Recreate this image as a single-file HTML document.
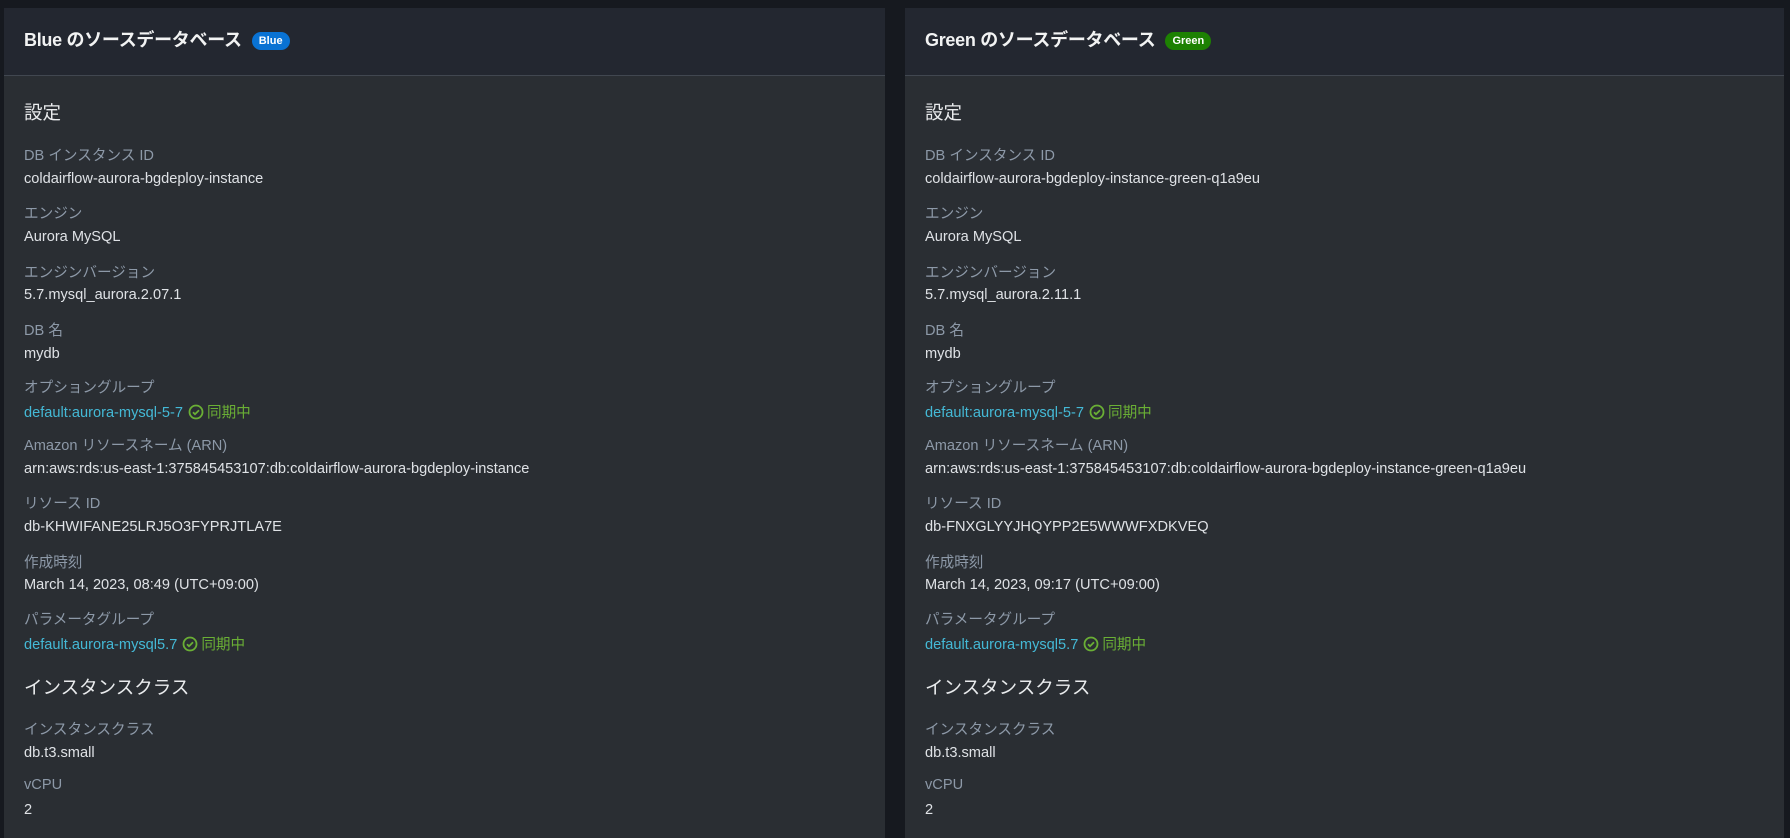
<!DOCTYPE html>
<html><head><meta charset="utf-8"><style>
body{margin:0;width:1790px;height:830px;background:#16191f;font-family:"Liberation Sans","Noto Sans CJK JP",sans-serif;overflow:hidden;position:relative}
.p{position:absolute;top:8px;height:830px;background:#2a2e33}
.h{height:67px;background:#232730;border-bottom:1px solid #414750;position:relative}
.t{position:absolute;left:20px;top:18px;font-size:18px;font-weight:bold;color:#f2f3f3;white-space:nowrap;letter-spacing:-0.3px}
.b{display:inline-block;font-size:11px;font-weight:bold;color:#fff;border-radius:11px;padding:3px 7px;margin-left:10px;vertical-align:2px;letter-spacing:0}
.c{position:absolute;left:20px;font-size:14.6px;white-space:nowrap}
.s{font-size:18.5px;color:#e9ebed}
.l{color:#8d99a8}.v{color:#dfe2e6}.k{color:#44b9d6}.g{color:#6aaf35}
svg{vertical-align:-3px;margin:0 3px 0 5px}
</style></head><body>
<div class="p" style="left:4px;width:881px"><div class="h"><div class="t">Blue のソースデータベース<span class="b" style="background:#0972d3">Blue</span></div></div></div>
<div class="p" style="left:905px;width:879px"><div class="h"><div class="t">Green のソースデータベース<span class="b" style="background:#1d8102">Green</span></div></div></div>
<div id="L"></div>
<script>
function col(x,d){var y=[[153,'l','DB インスタンス ID'],[180,'v',d[0]],[211,'l','エンジン'],[238,'v','Aurora MySQL'],[270,'l','エンジンバージョン'],[296,'v',d[1]],[328,'l','DB 名'],[355,'v','mydb'],[385,'l','オプショングループ'],[410,'k','default:aurora-mysql-5-7',1],[443,'l','Amazon リソースネーム (ARN)'],[470,'v',d[2]],[501,'l','リソース ID'],[528,'v',d[3]],[560,'l','作成時刻'],[586,'v',d[4]],[617,'l','パラメータグループ'],[642,'k','default.aurora-mysql5.7',1],[727,'l','インスタンスクラス'],[754,'v','db.t3.small'],[786,'l','vCPU'],[811,'v','2']];
var h='<div class="c s" style="left:'+x+'px;top:99px">設定</div><div class="c s" style="left:'+x+'px;top:674px">インスタンスクラス</div>';
y.forEach(function(r){h+='<div class="c '+r[1]+'" style="left:'+x+'px;top:'+(r[0]-9)+'px">'+r[2]+(r[3]?'<svg width="16" height="16" viewBox="0 0 16 16"><circle cx="8" cy="8" r="6.5" fill="none" stroke="#6aaf35" stroke-width="1.8"/><path d="M5 8.2l2 2 4-4" fill="none" stroke="#6aaf35" stroke-width="1.8"/></svg><span class="g">同期中</span>':'')+'</div>'});
return h}
document.getElementById('L').innerHTML=col(24,['coldairflow-aurora-bgdeploy-instance','5.7.mysql_aurora.2.07.1','arn:aws:rds:us-east-1:375845453107:db:coldairflow-aurora-bgdeploy-instance','db-KHWIFANE25LRJ5O3FYPRJTLA7E','March 14, 2023, 08:49 (UTC+09:00)'])+col(925,['coldairflow-aurora-bgdeploy-instance-green-q1a9eu','5.7.mysql_aurora.2.11.1','arn:aws:rds:us-east-1:375845453107:db:coldairflow-aurora-bgdeploy-instance-green-q1a9eu','db-FNXGLYYJHQYPP2E5WWWFXDKVEQ','March 14, 2023, 09:17 (UTC+09:00)']);
</script>
</body></html>
